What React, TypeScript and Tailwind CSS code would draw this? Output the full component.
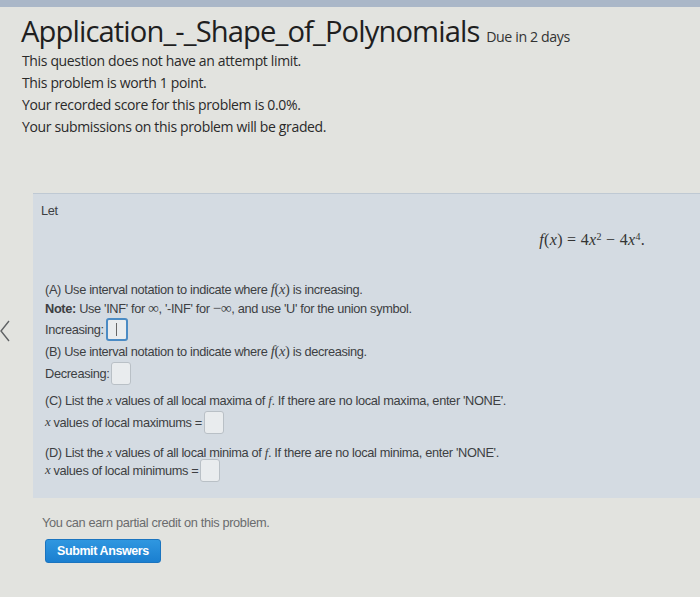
import React from "react";

const sans = { fontFamily: '"Liberation Sans", Arial, sans-serif' };
const serif = { fontFamily: '"Liberation Serif", "Times New Roman", serif' };

function X() {
  return (
    <span className="italic" style={serif}>
      x
    </span>
  );
}

function Fx() {
  return (
    <span style={serif} className="text-[14.5px]">
      <span className="italic">f</span>(<span className="italic">x</span>)
    </span>
  );
}

function Inf({ neg = false }: { neg?: boolean }) {
  return (
    <span style={serif} className="text-[15px] leading-none">
      {neg ? "−∞" : "∞"}
    </span>
  );
}

function AnswerBox({ focused = false, w = "w-[20px]" }: { focused?: boolean; w?: string }) {
  return (
    <span
      className={`inline-flex items-center justify-center ${w} h-[23px] ml-[2px] align-middle rounded-[3px] bg-[#e9ecee] ${
        focused ? "border-2 border-[#4b8bc4]" : "border border-[#b9c0c6]"
      }`}
    >
      {focused && <span className="block w-px h-[13px] bg-[#666]" />}
    </span>
  );
}

export default function App() {
  return (
    <div className="w-[700px] h-[597px] overflow-hidden bg-[#e2e3df] flex flex-col relative">
      <div className="h-[7px] bg-[#aab7c8] shrink-0" />

      {/* left edge chevron */}
      <svg className="absolute left-0 top-[320px]" width="10" height="22" viewBox="0 0 10 22">
        <path d="M9 1 L1 11 L9 21" fill="none" stroke="#5f6264" strokeWidth="1.4" />
      </svg>

      <div className="pl-[21px] pt-[7px]">
        <h1
          className="text-[#1f1f1f] text-[29.2px] leading-[34px] tracking-[-0.9px]"
          style={{ fontFamily: '"Open Sans", "Noto Sans", sans-serif' }}
        >
          Application_-_Shape_of_Polynomials{" "}
          <span className="text-[14.2px] tracking-[-0.4px] text-[#333]">Due in 2 days</span>
        </h1>
        <div
          className="mt-[-4px] text-[14px] leading-[22px] text-[#2a2a2a] tracking-[-0.35px] pl-[1px]"
          style={{ fontFamily: '"Open Sans", "Noto Sans", sans-serif' }}
        >
          <p>This question does not have an attempt limit.</p>
          <p>This problem is worth 1 point.</p>
          <p>Your recorded score for this problem is 0.0%.</p>
          <p>Your submissions on this problem will be graded.</p>
        </div>
      </div>

      <div
        className="ml-[33px] mt-[55px] h-[305px] bg-[#d4dbe2] border-t border-[#bfc9d3] text-[#3d3f42] text-[12.8px] tracking-[-0.35px]"
        style={sans}
      >
        <div className="pl-[8px] pt-[9px] leading-[16px]">Let</div>
        <div className="flex justify-end pr-[55px] mt-[11px] text-[16px] leading-[20px] text-[#333]" style={serif}>
          <span className="tracking-[0.3px]">
            <span className="italic">f</span>(<span className="italic">x</span>)&nbsp;=&nbsp;4<span className="italic">x</span>
            <sup className="text-[10px]">2</sup>&nbsp;−&nbsp;4<span className="italic">x</span>
            <sup className="text-[10px]">4</sup>.
          </span>
        </div>

        <div className="pl-[12px] mt-[29px] flex flex-col">
          <div className="leading-[20px]">
            (A) Use interval notation to indicate where <Fx /> is increasing.
          </div>
          <div className="leading-[18px]">
            <span className="font-bold">Note:</span> Use 'INF' for <Inf />, '-INF' for <Inf neg />, and use 'U' for the union symbol.
          </div>
          <div className="leading-[23px] flex items-center">
            Increasing: <AnswerBox focused w="w-[22px]" />
          </div>
          <div className="leading-[20px]">
            (B) Use interval notation to indicate where <Fx /> is decreasing.
          </div>
          <div className="leading-[23px] flex items-center">
            Decreasing: <AnswerBox />
          </div>
          <div className="leading-[20px] mt-[6px]">
            (C) List the <X /> values of all local maxima of <span className="italic" style={serif}>f</span>. If there are no local maxima, enter 'NONE'.
          </div>
          <div className="leading-[23px] flex items-center">
            <X />&nbsp;values of local maximums = <AnswerBox />
          </div>
          <div className="leading-[20px] mt-[9px]">
            (D) List the <X /> values of all local minima of <span className="italic" style={serif}>f</span>. If there are no local minima, enter 'NONE'.
          </div>
          <div className="leading-[23px] mt-[-4px] flex items-center">
            <X />&nbsp;values of local minimums = <AnswerBox />
          </div>
        </div>
      </div>

      <div className="pl-[42px] mt-[17px] text-[12.8px] text-[#6a6c6e] tracking-[-0.35px]" style={sans}>
        <p className="leading-[16px]">You can earn partial credit on this problem.</p>
        <button
          className="mt-[8px] ml-[3px] h-[24px] px-[11px] rounded-[3px] bg-gradient-to-b from-[#2f97e0] to-[#1a7fd0] border border-[#1a74bf] text-white font-bold text-[12.5px] tracking-[-0.4px]"
          style={sans}
        >
          Submit Answers
        </button>
      </div>
    </div>
  );
}
